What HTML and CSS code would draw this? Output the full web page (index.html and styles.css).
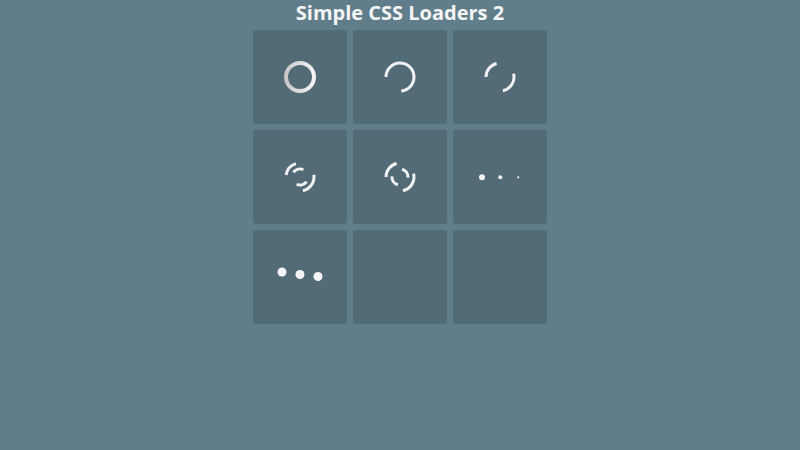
FILE: index.html
```html
<!DOCTYPE html>
<html lang="en">
<head>
    <meta charset="UTF-8">
    <title>Simple CSS Loaders 2</title>
    <link rel="stylesheet" href="styles.css">
</head>
<body>
<h1 class="title">Simple CSS Loaders 2</h1>
<div class="grid">
    <!--1 ring-->
    <div class="cell">
        <svg class="loader" width="40" height="40" viewBox="0 0 40 40">
            <defs>
                <linearGradient id="ringGrad" x1="0" y1="0" x2="1" y2="0">
                    <stop offset="0" stop-color="#c9c9c9"/>
                    <stop offset="1" stop-color="#f4f4f4"/>
                </linearGradient>
            </defs>
            <circle cx="20" cy="20" r="14" fill="none" stroke="url(#ringGrad)" stroke-width="4"/>
        </svg>
    </div>
    <!--2 arc-->
    <div class="cell">
        <svg class="loader" width="40" height="40" viewBox="0 0 40 40">
            <path class="arc" d="M6 20 A14 14 0 1 1 21.22 33.95"/>
        </svg>
    </div>
    <!--3 two arcs-->
    <div class="cell">
        <svg class="loader" width="40" height="40" viewBox="0 0 40 40">
            <path class="arc" d="M6 20 A14 14 0 0 1 16.61 6.42"/>
            <path class="arc" d="M33.58 16.61 A14 14 0 0 1 22.91 33.69"/>
        </svg>
    </div>
    <!--4 double arcs same way-->
    <div class="cell">
        <svg class="loader" width="40" height="40" viewBox="0 0 40 40">
            <path class="arc" d="M6.14 18.05 A14 14 0 0 1 15.91 6.61"/>
            <path class="arc" d="M33.83 17.81 A14 14 0 0 1 22.91 33.69"/>
            <path class="arc" d="M13.45 15.41 A8 8 0 0 1 23.38 12.75"/>
            <path class="arc" d="M26.55 24.59 A8 8 0 0 1 16.62 27.25"/>
        </svg>
    </div>
    <!--5 double arcs crossed-->
    <div class="cell">
        <svg class="loader" width="40" height="40" viewBox="0 0 40 40">
            <path class="arc" d="M6 20 A14 14 0 0 1 16.61 6.42"/>
            <path class="arc" d="M33.58 16.61 A14 14 0 0 1 22.91 33.69"/>
            <path class="arc" d="M22.07 12.27 A8 8 0 0 1 27.97 20.70"/>
            <path class="arc" d="M17.93 27.73 A8 8 0 0 1 12.03 19.30"/>
        </svg>
    </div>
    <!--6 fading dots-->
    <div class="cell">
        <svg class="loader" width="48" height="48" viewBox="0 0 48 48">
            <circle class="dot" cx="6" cy="24.3" r="3"/>
            <circle class="dot" cx="24.3" cy="24.3" r="2"/>
            <circle class="dot" cx="42.3" cy="24.3" r="1"/>
        </svg>
    </div>
    <!--7 bouncing dots-->
    <div class="cell">
        <svg class="loader" width="48" height="48" viewBox="0 0 48 48">
            <circle class="dot" cx="6" cy="19" r="4.5"/>
            <circle class="dot" cx="24" cy="21.5" r="4.5"/>
            <circle class="dot" cx="42" cy="23.5" r="4.5"/>
        </svg>
    </div>
    <div class="cell"></div>
    <div class="cell"></div>
</div>
</body>
</html>
```

FILE: styles.css
```css
* {
    margin: 0;
    padding: 0;
}

body {
    background-color: #607d8b;
    font-family: "Open Sans", "Noto Sans", sans-serif;
}

.title {
    height: 27px;
    line-height: 25px;
    font-size: 20px;
    font-weight: 700;
    color: #f5f5f5;
    text-align: center;
}

.grid {
    display: grid;
    grid-template-columns: repeat(3, 94px);
    grid-auto-rows: 94px;
    gap: 6px;
    width: 294px;
    margin: 3px auto 0;
}

.cell {
    display: flex;
    align-items: center;
    justify-content: center;
    background-color: #526b77;
    border-radius: 3px;
}

.loader {
    display: block;
}

.arc {
    fill: none;
    stroke: #f2f2f2;
    stroke-width: 3;
}

.dot {
    fill: #f5f5f5;
}
```
